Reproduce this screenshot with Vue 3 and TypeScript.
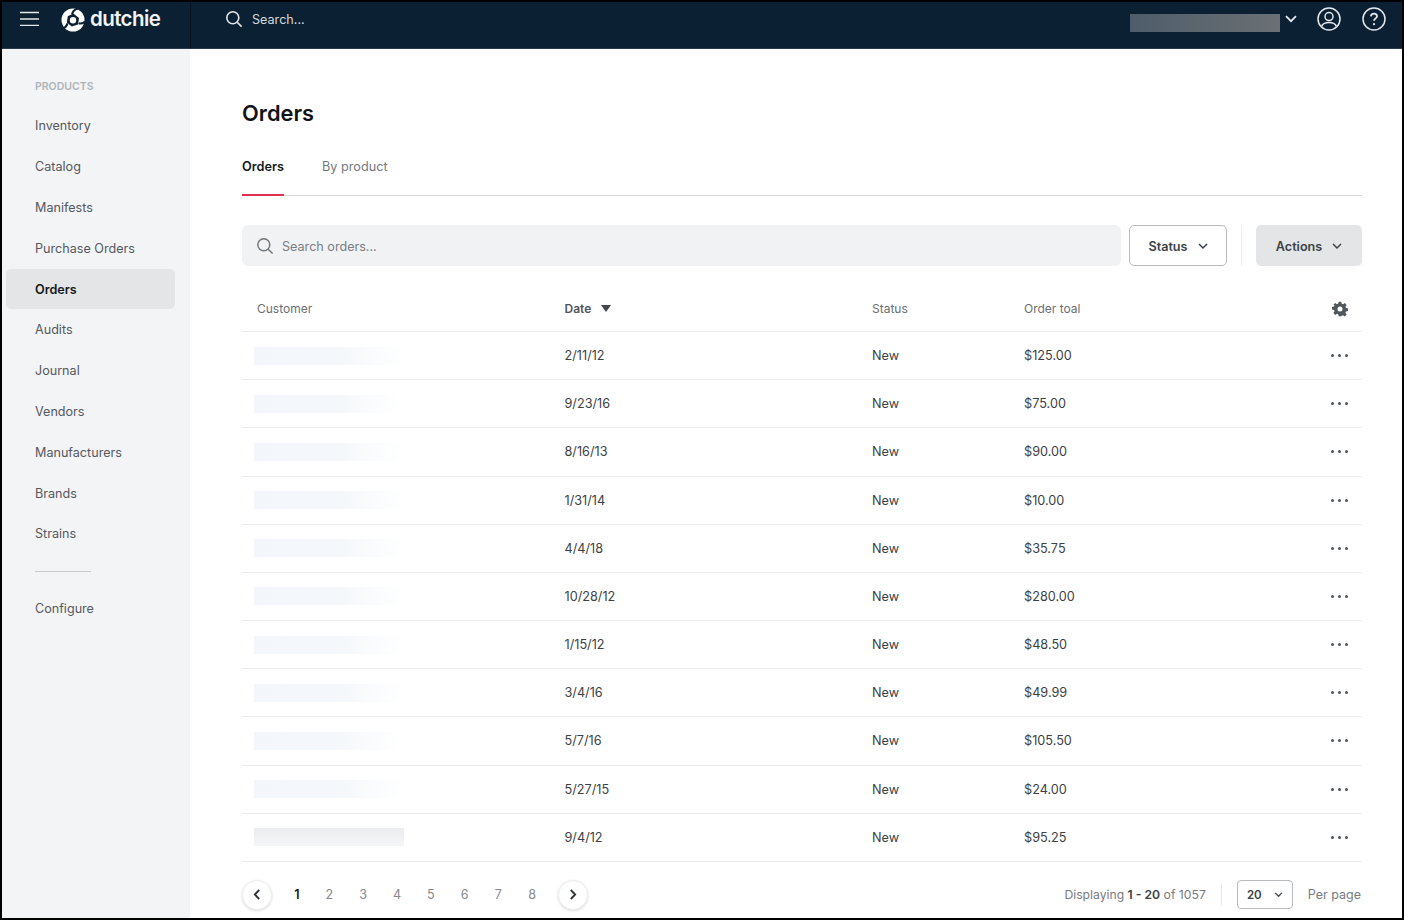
<script setup lang="ts">
/**
 * Orders list: top bar, side nav, filter row, table and pager
 */
interface Order { date: string; total: string; blur: number; grey?: boolean }

const navItems = [
  'Inventory', 'Catalog', 'Manifests', 'Purchase Orders', 'Orders', 'Audits',
  'Journal', 'Vendors', 'Manufacturers', 'Brands', 'Strains',
]

const orders: Order[] = [
  { date: '2/11/12', total: '$125.00', blur: 150 },
  { date: '9/23/16', total: '$75.00', blur: 146 },
  { date: '8/16/13', total: '$90.00', blur: 148 },
  { date: '1/31/14', total: '$10.00', blur: 150 },
  { date: '4/4/18', total: '$35.75', blur: 150 },
  { date: '10/28/12', total: '$280.00', blur: 150 },
  { date: '1/15/12', total: '$48.50', blur: 150 },
  { date: '3/4/16', total: '$49.99', blur: 150 },
  { date: '5/7/16', total: '$105.50', blur: 146 },
  { date: '5/27/15', total: '$24.00', blur: 150 },
  { date: '9/4/12', total: '$95.25', blur: 150, grey: true },
]

const pages = [1, 2, 3, 4, 5, 6, 7, 8]
</script>

<template>
  <div class="frame">
    <header class="topbar">
      <div class="brand">
        <svg class="burger" width="20" height="15" viewBox="0 0 20 15" fill="none" stroke="#e4e8ec" stroke-width="1.6">
          <path d="M0 1.5h19M0 8h19M0 14.5h19" />
        </svg>
        <svg class="logo" width="24" height="24" viewBox="0 0 24 24">
          <circle cx="12" cy="12" r="11.5" fill="#fff" />
          <path d="M12.4 5.6 18 10 17 16.6 10.8 18.6 5.8 14.4 6.8 8.2Z" fill="#0b2033" />
          <circle cx="12" cy="12.2" r="3.2" fill="#fff" />
          <g fill="none" stroke="#0b2033" stroke-width="2">
            <path d="M11 6.2C11.6 3.6 13.8 1.4 17 .6" />
            <path d="M17.6 15.2C19.8 16 22 15.6 24.2 13.6" />
            <path d="M6.6 15.4C5.8 18 3.8 20 1.4 20.8" />
          </g>
        </svg>
        <span class="wordmark">dutchie</span>
      </div>
      <div class="top-search">
        <svg width="18" height="18" viewBox="0 0 18 18" fill="none" stroke="#e4e8ec" stroke-width="1.6">
          <circle cx="7.8" cy="7.8" r="6" /><path d="M12.2 12.2 16.6 16.6" />
        </svg>
        <span>Search...</span>
      </div>
      <div class="top-right">
        <div class="account-blur"></div>
        <svg class="account-chev" width="12" height="8" viewBox="0 0 12 8" fill="none" stroke="#e8ebee" stroke-width="1.7">
          <path d="M1 1.2 6 6.2 11 1.2" />
        </svg>
        <svg width="24" height="24" viewBox="0 0 24 24" fill="none" stroke="#e4e8ec" stroke-width="1.5">
          <circle cx="12" cy="12" r="11" />
          <circle cx="12" cy="9.6" r="4" />
          <path d="M4.6 19.6C5.6 16.6 8 15.6 12 15.6S18.4 16.6 19.4 19.6" />
        </svg>
        <svg class="help" width="24" height="24" viewBox="0 0 24 24" fill="none" stroke="#e4e8ec" stroke-width="1.5">
          <circle cx="12" cy="12" r="11" />
          <path d="M8.9 9.4C9 7.6 10.3 6.6 12 6.6S15 7.7 15 9.2C15 11.4 12 11.4 12 13.8" stroke-width="1.8" />
          <circle cx="12" cy="17.2" r="1.1" fill="#e4e8ec" stroke="none" />
        </svg>
      </div>
    </header>

    <div class="body-row">
      <aside class="sidebar">
        <div class="nav-label">PRODUCTS</div>
        <a v-for="item in navItems" :key="item" class="nav-item" :class="{ on: item === 'Orders' }">{{ item }}</a>
        <div class="nav-rule"></div>
        <a class="nav-item">Configure</a>
      </aside>

      <main class="content">
        <h1 class="title">Orders</h1>

        <nav class="tabs">
          <a class="tab on">Orders</a>
          <a class="tab">By product</a>
        </nav>

        <div class="filters">
          <div class="search-box">
            <svg width="18" height="18" viewBox="0 0 18 18" fill="none" stroke="#6f7579" stroke-width="1.4">
              <circle cx="7.8" cy="7.8" r="6" /><path d="M12.2 12.2 16.6 16.6" />
            </svg>
            <span>Search orders...</span>
          </div>
          <button class="btn btn-outline">
            Status
            <svg width="10" height="7" viewBox="0 0 10 7" fill="none" stroke="#3c4247" stroke-width="1.5"><path d="M1 1 5 5 9 1" /></svg>
          </button>
          <div class="filter-rule"></div>
          <button class="btn btn-fill">
            Actions
            <svg width="10" height="7" viewBox="0 0 10 7" fill="none" stroke="#3c4247" stroke-width="1.5"><path d="M1 1 5 5 9 1" /></svg>
          </button>
        </div>

        <div class="table">
          <div class="row head">
            <div class="cell-customer">Customer</div>
            <div class="date-head">
              Date
              <svg width="10" height="7" viewBox="0 0 10 7" fill="#43484c"><path d="M0 0h10L5 7z" /></svg>
            </div>
            <div>Status</div>
            <div>Order toal</div>
            <div class="cell-end">
              <svg width="16" height="16" viewBox="0 0 24 24" fill="#50565a">
                <path fill-rule="evenodd" d="M10 1h4l.6 3.1 1.9.8 2.7-1.8 2.8 2.8-1.8 2.6.8 2 3 .6v4l-3 .6-.8 1.9 1.8 2.7-2.8 2.8-2.7-1.8-1.9.8L14 23h-4l-.6-3.1-1.9-.8-2.7 1.8L2 18.100l1.8-2.7-.8-1.9-3-.6v-4l3-.6.8-2L2 5.700 4.800 2.900l2.700 1.800 1.900-.8zM12 8.200a3.800 3.800 0 1 0 0 7.600 3.800 3.800 0 0 0 0-7.600z" />
              </svg>
            </div>
          </div>
          <div v-for="o in orders" :key="o.date" class="row">
            <div class="blur-cell">
              <div class="blur-bar" :class="{ grey: o.grey }" :style="{ width: o.blur + 'px' }"></div>
            </div>
            <div>{{ o.date }}</div>
            <div>New</div>
            <div>{{ o.total }}</div>
            <div class="cell-end dots"><i></i><i></i><i></i></div>
          </div>
        </div>

        <div class="pager">
          <div class="pager-left">
            <button class="round">
              <svg width="8" height="11" viewBox="0 0 8 11" fill="none" stroke="#2c3135" stroke-width="1.8"><path d="M6.2 1 1.8 5.5 6.2 10" /></svg>
            </button>
            <div class="pages">
              <span v-for="p in pages" :key="p" class="page" :class="{ on: p === 1 }">{{ p }}</span>
            </div>
            <button class="round">
              <svg width="8" height="11" viewBox="0 0 8 11" fill="none" stroke="#2c3135" stroke-width="1.8"><path d="M1.8 1 6.2 5.5 1.8 10" /></svg>
            </button>
          </div>
          <div class="pager-right">
            <span class="count">Displaying <b>1 - 20</b> of 1057</span>
            <div class="pager-rule"></div>
            <button class="per-select">
              20
              <svg width="9" height="6" viewBox="0 0 10 7" fill="none" stroke="#43484c" stroke-width="1.5"><path d="M1 1 5 5 9 1" /></svg>
            </button>
            <span class="per-label">Per page</span>
          </div>
        </div>
      </main>
    </div>
  </div>
</template>

<style scoped>
.frame {
  box-sizing: border-box;
  width: 1404px;
  height: 920px;
  border: 2px solid #000;
  display: flex;
  flex-direction: column;
  overflow: hidden;
  background: #fff;
  color: #3c4145;
  font-family: Inter, "Liberation Sans", sans-serif;
  font-size: 12.6px;
}

/* top bar */
.topbar {
  flex: 0 0 47px;
  box-sizing: border-box;
  display: flex;
  background: #0b2033;
  color: #dfe3e7;
  border-bottom: 1px solid #2a3a48;
}
.brand {
  box-sizing: border-box;
  width: 189px;
  border-right: 1px solid #06131f;
  display: flex;
  align-items: flex-start;
  padding: 9px 0 0 18px;
}
.logo { margin: -3px 0 0 21px; }
.wordmark {
  margin: -7px 0 0 5px;
  color: #f2f4f6;
  font-size: 20.5px;
  font-weight: 600;
  letter-spacing: -0.6px;
  line-height: 30px;
}
.top-search {
  display: flex;
  align-items: center;
  gap: 9px;
  height: 34px;
  padding-left: 34px;
  color: #d5d9dd;
}
.top-right {
  margin-left: auto;
  display: flex;
  align-items: center;
  height: 34px;
  padding-right: 16px;
}
.account-blur {
  width: 150px;
  height: 18px;
  align-self: flex-start;
  margin-top: 12px;
  background: linear-gradient(90deg, #4e5d6b 0%, #5f686f 60%, #6a7075 100%);
}
.account-chev { margin: 0 20px 0 5px; }
.help { margin-left: 21px; }

/* side nav */
.body-row {
  flex: 1;
  display: flex;
  min-height: 0;
}
.sidebar {
  box-sizing: border-box;
  width: 188px;
  background: #f3f4f6;
  padding: 29px 15px 0 4px;
  display: flex;
  flex-direction: column;
}
.nav-label {
  padding-left: 29px;
  height: 27.5px;
  line-height: 18px;
  font-size: 10.5px;
  font-weight: 600;
  color: #b0b4b8;
}
.nav-item {
  height: 40.8px;
  flex: none;
  display: flex;
  align-items: center;
  padding-left: 29px;
  border-radius: 5px;
  color: #55595e;
}
.nav-item.on {
  background: #e3e5e7;
  color: #15191c;
  font-weight: 600;
}
.nav-rule {
  width: 56px;
  height: 1px;
  margin: 17px 0 16px 29px;
  background: #c8cbce;
}

/* main column */
.content {
  flex: 1;
  min-width: 0;
  padding: 0 40px 0 52px;
  display: flex;
  flex-direction: column;
}
.title {
  margin: 49px 0 0;
  font-size: 21.8px;
  line-height: 30px;
  font-weight: 600;
  color: #101417;
}
.tabs {
  display: flex;
  gap: 38px;
  height: 60px;
  margin-top: 7px;
  border-bottom: 1px solid #d6d7d9;
  font-size: 12.7px;
}
.tab {
  box-sizing: border-box;
  display: flex;
  align-items: center;
  height: 60px;
  padding-top: 2px;
  color: #75797d;
}
.tab.on {
  height: 61px;
  padding-top: 3px;
  color: #15191c;
  font-weight: 600;
  border-bottom: 2px solid #e0314f;
}
.filters {
  display: flex;
  align-items: stretch;
  height: 41px;
  margin-top: 29px;
}
.search-box {
  flex: 1;
  display: flex;
  align-items: center;
  gap: 8px;
  padding: 1px 0 0 14px;
  background: #f1f2f4;
  border-radius: 6px;
  color: #797e82;
}
.btn {
  font: inherit;
  font-weight: 600;
  color: #3c4247;
  display: flex;
  align-items: center;
  justify-content: center;
  gap: 10px;
  padding: 1px 0 0;
  border-radius: 5px;
}
.btn-outline {
  width: 98px;
  margin-left: 8px;
  background: #fff;
  border: 1px solid #b8bbbe;
}
.filter-rule {
  width: 1px;
  margin: 0 14px;
  background: #eceded;
}
.btn-fill {
  width: 106px;
  background: #e3e5e7;
  border: 0;
}

/* table */
.table {
  margin-top: 20px;
  font-size: 12.7px;
}
.row {
  display: grid;
  grid-template-columns: 322.5px 307.5px 152px 1fr 45px;
  align-items: center;
  height: 48.18px;
  box-sizing: border-box;
  border-bottom: 1.5px solid #e9eaeb;
  color: #3c4145;
}
.row.head {
  height: 46px;
  font-size: 12px;
  color: #6a6f73;
}
.cell-customer { padding-left: 15px; }
.date-head {
  display: flex;
  align-items: center;
  gap: 10px;
  font-weight: 600;
  color: #50555a;
}
.cell-end {
  display: flex;
  justify-content: center;
  align-items: center;
}
.blur-cell { padding-left: 12px; }
.blur-bar {
  height: 18px;
  background: linear-gradient(90deg, #f3f7fb 0%, #f5f8fb 60%, #fff 100%);
}
.blur-bar.grey {
  background: linear-gradient(180deg, #ebecee 0%, #f4f5f6 100%);
}
.dots { gap: 4px; }
.dots i {
  display: block;
  width: 3px;
  height: 3px;
  border-radius: 50%;
  background: #50555a;
}

/* pager */
.pager {
  flex: 1;
  display: flex;
  align-items: center;
  justify-content: space-between;
  padding-top: 10px;
}
.pager-left {
  display: flex;
  align-items: center;
}
.round {
  width: 30px;
  height: 30px;
  padding: 0;
  display: flex;
  align-items: center;
  justify-content: center;
  background: #fff;
  border: 1px solid #eceded;
  border-radius: 50%;
  box-shadow: 0 1px 3px rgba(0, 0, 0, 0.14);
}
.pages {
  display: flex;
  padding: 0 9px 0 9.5px;
}
.page {
  width: 33.8px;
  text-align: center;
  color: #85898d;
}
.page.on {
  width: 31px;
  color: #15191c;
  font-weight: 600;
}
.pager-right {
  display: flex;
  align-items: center;
  padding-right: 1px;
}
.count {
  font-size: 12.2px;
  color: #777b80;
}
.count b {
  font-weight: 600;
  color: #3c4145;
}
.pager-rule {
  width: 1px;
  height: 20px;
  margin: 0 15px;
  background: #e6e7e8;
}
.per-select {
  font: inherit;
  font-size: 11.5px;
  font-weight: 600;
  color: #3c4247;
  width: 56px;
  height: 29px;
  display: flex;
  align-items: center;
  justify-content: center;
  gap: 12px;
  background: #fff;
  border: 1px solid #b8bbbe;
  border-radius: 4px;
}
.per-label {
  margin-left: 15px;
  font-size: 12.5px;
  color: #777b80;
}
</style>

<style>
html, body { margin: 0; background: #fff; }
</style>
